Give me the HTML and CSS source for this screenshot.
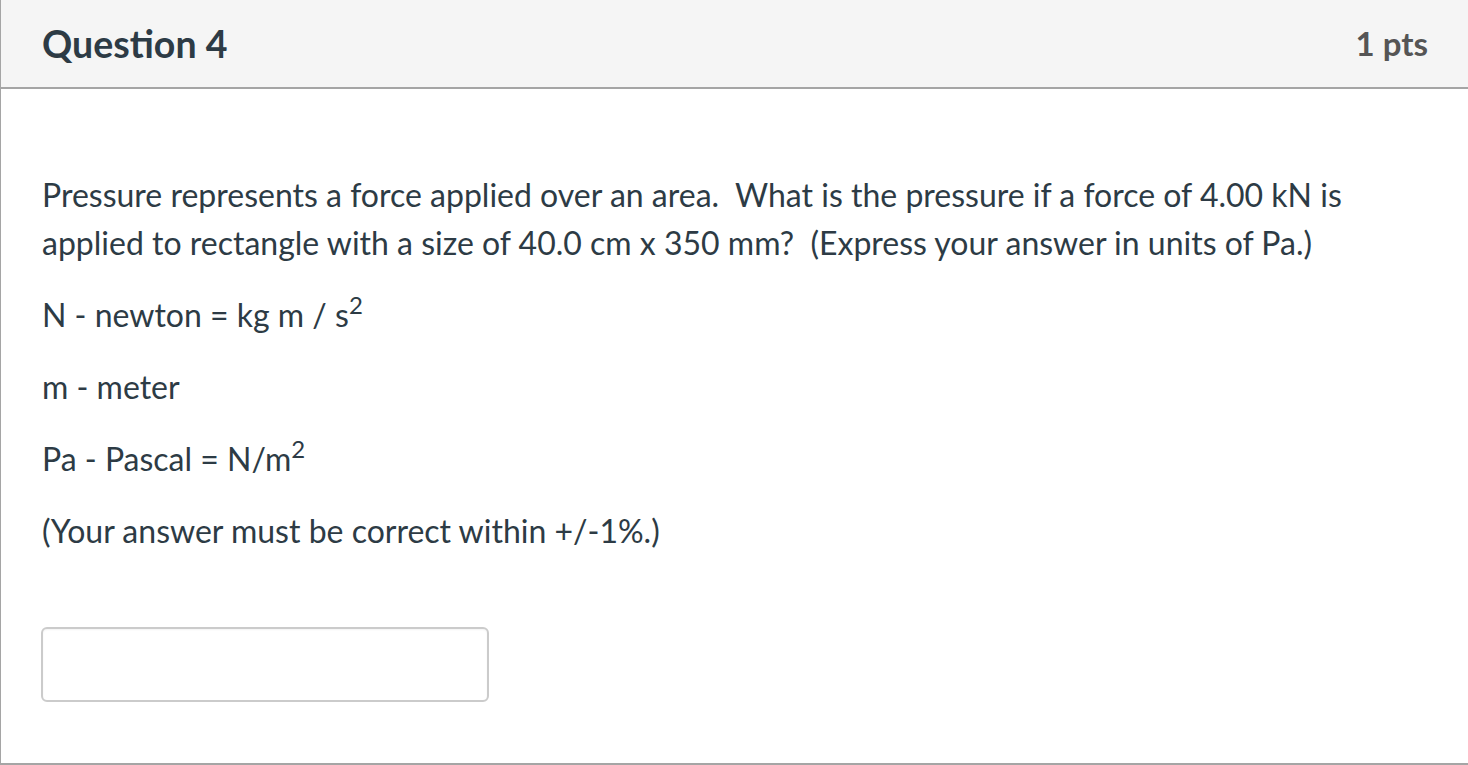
FILE: index.html
```html
<!DOCTYPE html>
<html lang="en">
<head>
<meta charset="utf-8">
<title>Question 4</title>
<link rel="stylesheet" href="styles.css">
</head>
<body>
<div class="question">
  <div class="question-header">
    <h2 class="question-title">Question 4</h2>
    <span class="question-points">1 pts</span>
  </div>
  <div class="question-body">
    <div class="question-text">
      <p>Pressure represents a force applied over an area.&nbsp; What is the pressure if a force of 4.00 kN is applied to rectangle with a size of 40.0 cm x 350 mm?&nbsp; (Express your answer in units of Pa.)</p>
      <p>N - newton = kg m / s<sup>2</sup></p>
      <p>m - meter</p>
      <p>Pa - Pascal = N/m<sup>2</sup></p>
      <p>(Your answer must be correct within +/-1%.)</p>
    </div>
    <div class="answer">
      <input class="answer-input" type="text" aria-label="Answer">
    </div>
  </div>
</div>
</body>
</html>
```
FILE: styles.css
```css
html, body {
  margin: 0;
  padding: 0;
  background: #ffffff;
  overflow: hidden;
}
body {
  font-family: Lato, "Open Sans", sans-serif;
  color: #2d3b45;
}
.question {
  width: 1500px;
  border-left: 1px solid #a5a5a5;
  border-bottom: 2px solid #a5a5a5;
  box-sizing: border-box;
}
.question-header {
  display: flex;
  align-items: center;
  justify-content: space-between;
  width: 1467px;
  box-sizing: border-box;
  height: 89px;
  padding: 0 40px 0 41px;
  background: #f5f5f5;
  border-bottom: 2px solid #a5a5a5;
}
.question-title {
  margin: 0;
  font-size: 37.5px;
  font-weight: 700;
  color: #2d3b45;
  line-height: 1;
}
.question-points {
  font-size: 33px;
  font-weight: 700;
  color: #555555;
  line-height: 1;
}
.question-body {
  width: 1467px;
  box-sizing: border-box;
  padding: 82px 41px 61px;
}
.question-text p {
  margin: 0 0 24px;
  font-size: 32px;
  line-height: 48px;
}
.question-text p:last-child {
  margin-bottom: 0;
}
sup {
  font-size: 24px;
  line-height: 0;
  vertical-align: 13px;
}
.answer {
  margin-top: 72px;
}
.answer-input {
  display: block;
  width: 448px;
  height: 75px;
  box-sizing: border-box;
  margin: 0 0 0 -1px;
  border: 2px solid #cbcbcb;
  border-radius: 6px;
  background: #fff;
  box-shadow: inset 0 1px 2px rgba(0,0,0,0.05);
}
```
